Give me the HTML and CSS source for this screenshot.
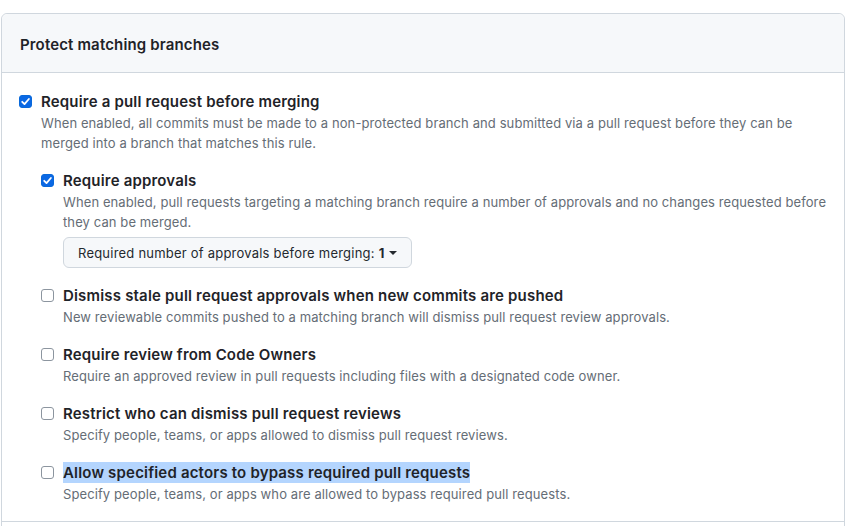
FILE: index.html
```html
<!DOCTYPE html>
<html lang="en">
<head>
<meta charset="utf-8">
<title>Protect matching branches</title>
<link rel="stylesheet" href="styles.css">
</head>
<body>
<div class="box">
  <div class="box-header">Protect matching branches</div>
  <div class="box-body">
    <div class="option">
      <span class="check checked"><svg viewBox="0 0 13 13" width="13" height="13"><path d="M3.2 6.8 L5.5 9.1 L9.9 4" fill="none" stroke="#fff" stroke-width="1.8" stroke-linecap="round" stroke-linejoin="round"/></svg></span>
      <div class="option-text">
        <div class="label">Require a pull request before merging</div>
        <div class="note">When enabled, all commits must be made to a non-protected branch and submitted via a pull request before they can be merged into a branch that matches this rule.</div>

        <div class="option nested first">
          <span class="check checked"><svg viewBox="0 0 13 13" width="13" height="13"><path d="M3.2 6.8 L5.5 9.1 L9.9 4" fill="none" stroke="#fff" stroke-width="1.8" stroke-linecap="round" stroke-linejoin="round"/></svg></span>
          <div class="option-text">
            <div class="label">Require approvals</div>
            <div class="note">When enabled, pull requests targeting a matching branch require a number of approvals and no changes requested before they can be merged.</div>
            <div class="select-btn">Required number of approvals before merging: <b>1</b><span class="caret"></span></div>
          </div>
        </div>

        <div class="option nested after-btn">
          <span class="check"></span>
          <div class="option-text">
            <div class="label">Dismiss stale pull request approvals when new commits are pushed</div>
            <div class="note">New reviewable commits pushed to a matching branch will dismiss pull request review approvals.</div>
          </div>
        </div>

        <div class="option nested">
          <span class="check"></span>
          <div class="option-text">
            <div class="label">Require review from Code Owners</div>
            <div class="note">Require an approved review in pull requests including files with a designated code owner.</div>
          </div>
        </div>

        <div class="option nested">
          <span class="check"></span>
          <div class="option-text">
            <div class="label">Restrict who can dismiss pull request reviews</div>
            <div class="note">Specify people, teams, or apps allowed to dismiss pull request reviews.</div>
          </div>
        </div>

        <div class="option nested">
          <span class="check"></span>
          <div class="option-text">
            <div class="label"><span class="selected">Allow specified actors to bypass required pull requests</span></div>
            <div class="note">Specify people, teams, or apps who are allowed to bypass required pull requests.</div>
          </div>
        </div>
      </div>
    </div>
  </div>
  <div class="box-next"></div>
</div>
</body>
</html>
```

FILE: styles.css
```css
html, body {
  margin: 0;
  padding: 0;
  background: #ffffff;
  overflow: hidden;
}
body {
  padding: 13px 6px 0 1px;
  font-family: Inter, "Noto Sans", "Liberation Sans", sans-serif;
  color: #1f2328;
}
.box {
  border: 1px solid #d0d7de;
  border-radius: 6px;
  height: 700px;
}
.box-header {
  background: #f6f8fa;
  border-bottom: 1px solid #d0d7de;
  border-radius: 6px 6px 0 0;
  padding: 20px 18px 17px;
  font-size: 15px;
  font-weight: 600;
  letter-spacing: 0.15px;
  line-height: 21px;
}
.box-body {
  padding: 19px 17px 17px;
  border-bottom: 1px solid #d0d7de;
}
.option {
  display: flex;
  align-items: flex-start;
  gap: 9px;
}
.option.nested {
  margin-top: 18px;
}
.option.nested.first {
  margin-top: 18px;
}
.option.nested.after-btn {
  margin-top: 18px;
}
.check {
  flex: none;
  width: 13px;
  height: 13px;
  box-sizing: border-box;
  border: 1px solid #8c959f;
  border-radius: 3px;
  background: #fff;
  margin-top: 3px;
  display: flex;
}
.check.checked {
  border-color: #0969da;
  background: #0b68e4;
}
.check svg {
  display: block;
  margin: -1px;
}
.option-text {
  flex: 1;
  min-width: 0;
}
.label {
  font-size: 15px;
  font-weight: 600;
  letter-spacing: 0.18px;
  line-height: 20px;
}
.note {
  font-size: 13px;
  letter-spacing: 0.1px;
  line-height: 20px;
  color: #656d76;
  margin-top: 1px;
}
.select-btn {
  display: inline-flex;
  align-items: center;
  margin-top: 5px;
  height: 31px;
  box-sizing: border-box;
  padding: 0 14px 0 14px;
  border: 1px solid #d0d7de;
  border-radius: 6px;
  background: #f6f8fa;
  font-size: 13px;
  letter-spacing: 0.22px;
  color: #24292f;
}
.select-btn b {
  font-weight: 700;
  margin-left: 4px;
}
.caret {
  display: inline-block;
  width: 0;
  height: 0;
  border-left: 4.5px solid transparent;
  border-right: 4.5px solid transparent;
  border-top: 4.5px solid #24292f;
  margin-left: 4px;
}
.selected {
  background: #b4d5fe;
  padding: 1px 0;
}
```
